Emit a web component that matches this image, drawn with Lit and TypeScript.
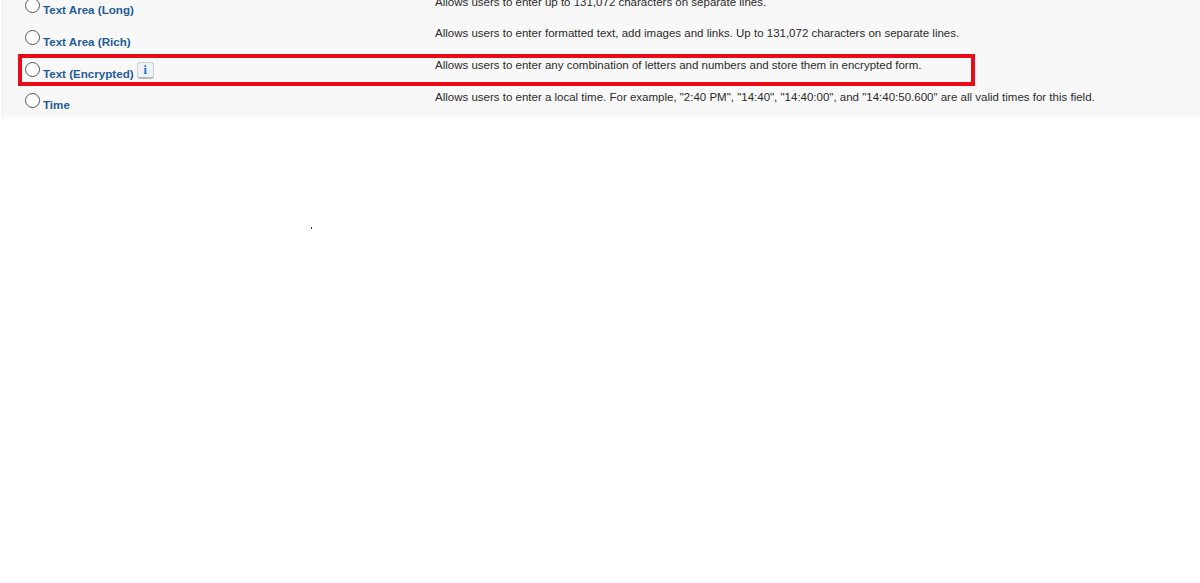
import { LitElement, html, css } from "lit";
import { customElement } from "lit/decorators.js";

const rows = [
  { label: "Text Area (Long)", desc: "Allows users to enter up to 131,072 characters on separate lines.", info: false },
  { label: "Text Area (Rich)", desc: "Allows users to enter formatted text, add images and links. Up to 131,072 characters on separate lines.", info: false },
  { label: "Text (Encrypted)", desc: "Allows users to enter any combination of letters and numbers and store them in encrypted form.", info: true },
  { label: "Time", desc: 'Allows users to enter a local time. For example, "2:40 PM", "14:40", "14:40:00", and "14:40:50.600" are all valid times for this field.', info: false },
];

@customElement("app-root")
export class AppRoot extends LitElement {
  static styles = css`
    :host { display: block; height: 583px; background: #fff; position: relative; overflow: hidden; font-family: "Liberation Sans", Arial, sans-serif; }
    .panel { margin-left: 2px; height: 117px; overflow: hidden; background: #f8f8f8; border-left: 1px solid #ececec; }
    .list { margin-top: -7px; display: flex; flex-direction: column; }
    .row { display: grid; grid-template-columns: 432px 1fr; height: 31.8px; }
    .pick { display: flex; align-items: flex-start; padding: 5px 0 0 22px; }
    .radio { width: 13px; height: 13px; border: 1px solid #555; border-radius: 50%; background: #fff; flex: none; }
    .label { margin: 4px 0 0 3px; font-size: 11.6px; line-height: 16px; font-weight: bold; color: #1f5b97; white-space: nowrap; }
    .info { width: 17px; height: 17px; margin: 0 0 0 3px; box-sizing: border-box; border: 1px solid #c9cfd3; border-bottom: 2px solid #b4babf; border-radius: 3px; background: #eef2f6; color: #1a6ed0; font: bold 12px/14px "Liberation Serif", serif; text-align: center; flex: none; }
    .desc { padding-top: 1.6px; font-size: 11.5px; line-height: 15px; color: #2b2b2b; white-space: nowrap; }
    .mark { position: absolute; left: 18px; top: 54px; width: 957px; height: 31.5px; box-sizing: border-box; border: 4px solid #e80c18; pointer-events: none; }
    .dot { position: absolute; left: 311px; top: 227px; width: 1px; height: 2px; background: #333; }
  `;

  render() {
    return html`
      <div class="panel">
        <div class="list">
          ${rows.map(
            (r) => html`
              <div class="row">
                <div class="pick">
                  <span class="radio"></span>
                  <span class="label">${r.label}</span>
                  ${r.info ? html`<span class="info">i</span>` : ""}
                </div>
                <div class="desc">${r.desc}</div>
              </div>
            `
          )}
        </div>
      </div>
      <div class="mark"></div>
      <div class="dot"></div>
    `;
  }
}
